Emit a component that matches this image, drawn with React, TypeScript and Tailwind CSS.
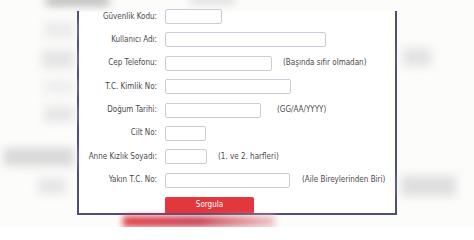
import React from "react";

type Row = {
   label: string;
   width: string;
   hint?: string;
   hintGap?: string;
};

const rows: Row[] = [
   { label: "Güvenlik Kodu:", width: "w-[57px]" },
   { label: "Kullanıcı Adı:", width: "w-[161px]" },
   { label: "Cep Telefonu:", width: "w-[107px]", hint: "(Başında sıfır olmadan)", hintGap: "ml-[11px]" },
   { label: "T.C. Kimlik No:", width: "w-[126px]" },
   { label: "Doğum Tarihi:", width: "w-[96px]", hint: "(GG/AA/YYYY)", hintGap: "ml-[16px]" },
   { label: "Cilt No:", width: "w-[41px]" },
   { label: "Anne Kızlık Soyadı:", width: "w-[42px]", hint: "(1. ve 2. harfleri)", hintGap: "ml-[11px]" },
   { label: "Yakın T.C. No:", width: "w-[125px]", hint: "(Aile Bireylerinden Biri)", hintGap: "ml-[12px]" },
];

function FormRow({ label, width, hint, hintGap }: Row) {
   return (
      <div className="flex items-center h-[15px]">
         <span className="w-[78px] text-right whitespace-nowrap">{label}</span>
         <div className={`ml-[8px] h-[15px] ${width} rounded-[2px] border border-[#c9cdd6] bg-white`} />
         {hint && <span className={`${hintGap} whitespace-nowrap`}>{hint}</span>}
      </div>
   );
}

export default function App() {
   return (
      <div
         className="relative flex w-[474px] h-[227px] overflow-hidden bg-[#fcfcfb] text-[8px] text-[#4a4a4a]"
         style={{ fontFamily: '"DejaVu Sans Condensed", "DejaVu Sans", Verdana, sans-serif' }}
      >
         {/* blurred strip along the top edge */}
         <div className="absolute left-[45px] top-[-4px] w-[65px] h-[10px] rounded-full bg-[#a0a0a0] blur-[4px] opacity-70" />
         <div className="absolute left-[190px] top-[-3px] w-[45px] h-[7px] rounded-full bg-[#d8d8d8] blur-[4px]" />

         {/* left gutter, blurred page behind */}
         <div className="w-[77px] shrink-0 flex flex-col items-end pr-[3px] pt-[22px] gap-[12px]">
            <div className="w-[30px] h-[16px] bg-[#ebebeb] blur-[5px]" />
            <div className="w-[32px] h-[18px] bg-[#e4e4e4] blur-[5px]" />
            <div className="w-[30px] h-[14px] bg-[#eeeeee] blur-[5px]" />
            <div className="w-[30px] h-[16px] bg-[#e6e6e6] blur-[5px]" />
            <div className="mt-[14px] w-[70px] h-[18px] bg-[#d8d8d8] blur-[5px]" />
            <div className="mr-[8px] w-[28px] h-[16px] bg-[#e5e5e5] blur-[5px]" />
         </div>

         {/* form column */}
         <div className="flex flex-col w-[320px] shrink-0 pt-[11px]">
            <div className="border-x-[2px] border-b-[2px] border-[#4d4d7e] bg-white">
               <div className="-mt-[2px] flex flex-col gap-[8.4px]">
                  {rows.map((r) => (
                     <FormRow key={r.label} {...r} />
                  ))}
                  <div className="flex">
                     <div className="ml-[86px] mt-[1px] w-[89px] h-[16px] rounded-t-[2px] bg-[#e2373c] text-white text-center leading-[16px]">
                        Sorgula
                     </div>
                  </div>
               </div>
            </div>
            {/* blurred reflection of the button */}
            <div className="ml-[46px] mt-[1px] w-[152px] h-[16px] bg-gradient-to-r from-[#e2434a] via-[#c94356] to-[#ecc4ca] blur-[3px]" />
         </div>

         {/* right gutter */}
         <div className="flex-1 flex flex-col pl-[6px] pt-[48px]">
            <div className="w-[28px] h-[18px] bg-[#e2e2e2] blur-[5px]" />
            <div className="mt-[110px] -ml-[2px] w-[55px] h-[20px] bg-[#dedede] blur-[5px]" />
         </div>
      </div>
   );
}
